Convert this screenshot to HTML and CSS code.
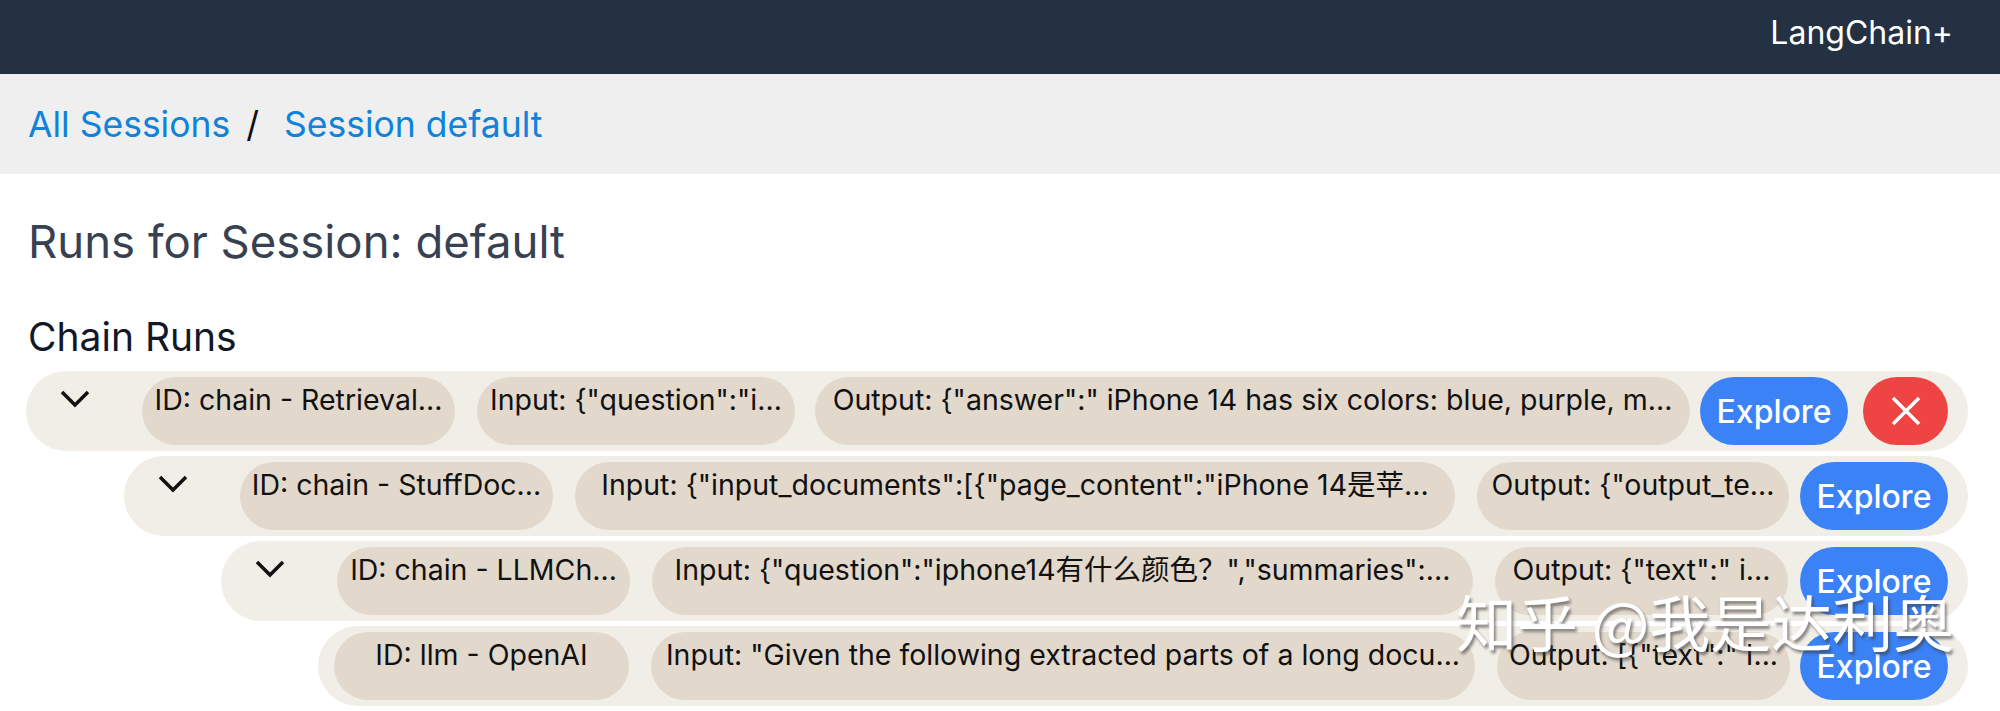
FILE: index.html
```html
<!DOCTYPE html>
<html lang="en">
<head>
  <meta charset="UTF-8" />
  <title>LangChain+</title>
  <link rel="stylesheet" href="styles.css">
</head>
<body>

<header class="topbar">LangChain+</header>

<nav class="crumbs">
  <a href="#">All Sessions</a>
  <span class="crumb-sep">/</span>
  <a href="#">Session default</a>
</nav>

<main class="content">
  <h1 class="page-title">Runs for Session: default</h1>
  <h2 class="section-title">Chain Runs</h2>

  <div class="run depth-0">
    <button class="toggle"><svg viewBox="0 0 32 20" width="32" height="20"><path d="M3 3l13 13L29 3"/></svg></button>
    <div class="cell id-a">ID: chain - Retrieval...</div>
    <div class="cell in-a">Input: {"question":"i...</div>
    <div class="cell out-a">Output: {"answer":" iPhone 14 has six colors: blue, purple, m...</div>
    <div class="actions">
      <button class="explore">Explore</button>
      <button class="remove"><svg viewBox="0 0 32 32" width="32" height="32"><path d="M3 3l26 26M29 3L3 29"/></svg></button>
    </div>
  </div>

  <div class="run depth-1">
    <button class="toggle"><svg viewBox="0 0 32 20" width="32" height="20"><path d="M3 3l13 13L29 3"/></svg></button>
    <div class="cell id-a">ID: chain - StuffDoc...</div>
    <div class="cell in-b">Input: {"input_documents":[{"page_content":"iPhone 14是苹...</div>
    <div class="cell out-b">Output: {"output_te...</div>
    <div class="actions">
      <button class="explore">Explore</button>
    </div>
  </div>

  <div class="run depth-2">
    <button class="toggle"><svg viewBox="0 0 32 20" width="32" height="20"><path d="M3 3l13 13L29 3"/></svg></button>
    <div class="cell id-b">ID: chain - LLMCh...</div>
    <div class="cell in-c">Input: {"question":"iphone14有什么颜色？","summaries":...</div>
    <div class="cell out-c">Output: {"text":" i...</div>
    <div class="actions">
      <button class="explore">Explore</button>
    </div>
  </div>

  <div class="run depth-3 leaf">
    <div class="cell id-c">ID: llm - OpenAI</div>
    <div class="cell in-d">Input: "Given the following extracted parts of a long docu...</div>
    <div class="cell out-c">Output: [{"text":" I...</div>
    <div class="actions">
      <button class="explore">Explore</button>
    </div>
  </div>

  <div class="next-run"></div>
</main>

<div class="watermark">知乎 @我是达利奥</div>

</body>
</html>
```

FILE: styles.css
```css
html, body {
  margin: 0;
  height: 711px;
  overflow: hidden;
}
body {
  position: relative;
  font-family: Inter, "Noto Sans CJK SC", sans-serif;
  background: #fff;
  color: #111;
}

.topbar {
  height: 74px;
  box-sizing: border-box;
  background: #243142;
  color: #fff;
  font-size: 32px;
  line-height: 66px;
  text-align: right;
  padding-right: 47px;
}

.crumbs {
  height: 100px;
  box-sizing: border-box;
  background: #efefef;
  display: flex;
  align-items: center;
  padding-left: 28px;
  font-size: 35.5px;
}
.crumbs a {
  color: #0f82dc;
  text-decoration: none;
}
.crumb-sep {
  margin: 0 25px 0 16px;
  color: #111;
}

.content {
  padding: 0 32px 0 26px;
}
.page-title {
  margin: 0;
  padding: 40px 0 0 2px;
  font-size: 45.5px;
  line-height: 56px;
  font-weight: 400;
  color: #374151;
}
.section-title {
  margin: 0;
  padding: 44px 0 11px 2px;
  font-size: 39px;
  line-height: 46px;
  font-weight: 400;
  color: #111827;
}

.run {
  display: flex;
  align-items: stretch;
  gap: 22px;
  height: 80px;
  box-sizing: border-box;
  padding: 6px 20px 6px 0;
  margin-bottom: 5px;
  background: #f1eee7;
  border-radius: 40px;
}
.depth-1 { margin-left: 98px; }
.depth-2 { margin-left: 195px; }
.depth-3 { margin-left: 292px; }
.leaf { padding-left: 16px; }

.next-run {
  height: 2px;
  margin-left: 31px;
  background: #f1eee7;
}

.toggle {
  flex: 0 0 94px;
  padding: 8px 0 0 4px;
  border: none;
  background: none;
  display: flex;
  justify-content: center;
  align-items: flex-start;
}
.toggle svg {
  margin-top: 4px;
}
.toggle path {
  fill: none;
  stroke: #111;
  stroke-width: 3.5;
}

.cell {
  flex: none;
  box-sizing: border-box;
  padding: 3px 4px 0;
  border-radius: 34px;
  background: #e2d8cc;
  font-size: 28.5px;
  line-height: 40px;
  text-align: center;
  white-space: nowrap;
  overflow: hidden;
}
.id-a { width: 313px; }
.id-b { width: 293px; }
.id-c { width: 295px; }
.in-a { width: 318px; }
.in-b { width: 880px; }
.in-c { width: 821px; }
.in-d { width: 824px; }
.out-a { width: 875px; margin-left: -2px; margin-right: -12px; }
.out-b { width: 312px; margin-right: -12px; }
.out-c { width: 293px; margin-right: -12px; }

.actions {
  flex: none;
  display: flex;
  gap: 15px;
  margin-left: auto;
}
.explore {
  width: 148px;
  border: none;
  border-radius: 34px;
  background: #3b82f6;
  color: #fff;
  font-family: inherit;
  font-size: 32px;
  font-weight: 500;
  padding: 0;
}
.remove {
  width: 85px;
  border: none;
  border-radius: 34px;
  background: #ef4444;
  padding: 0;
  display: flex;
  justify-content: center;
  align-items: center;
}
.remove path {
  fill: none;
  stroke: #fff;
  stroke-width: 3.5;
}

.watermark {
  position: absolute;
  left: 1456px;
  top: 581px;
  font-family: "Noto Sans CJK SC", sans-serif;
  font-size: 61px;
  font-weight: 400;
  line-height: 80px;
  color: #fff;
  white-space: nowrap;
  text-shadow: 2px 3px 3px rgba(60, 60, 60, 0.6);
}
```
